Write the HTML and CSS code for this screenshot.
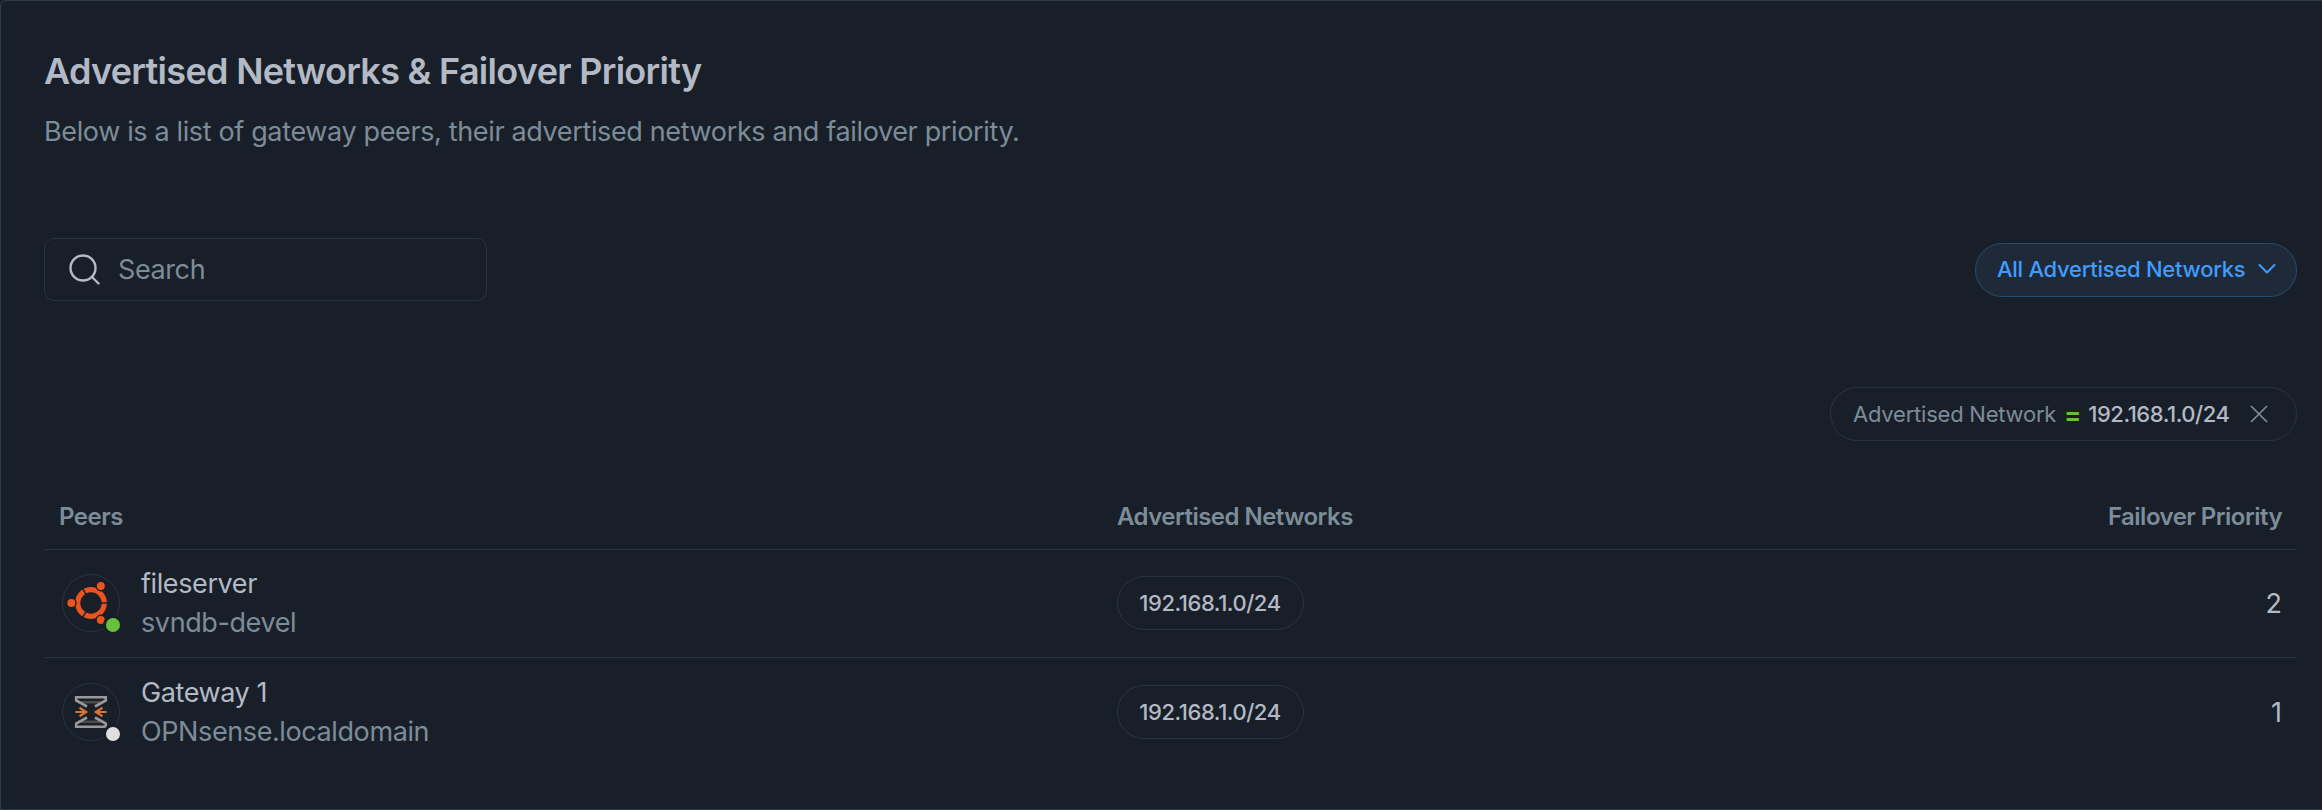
FILE: index.html
```
<!DOCTYPE html>
<html lang="en">

<head>
    <meta charset="UTF-8">
    <meta name="viewport" content="width=device-width, initial-scale=1.0">
    <link rel="stylesheet" href="styles.css">

    <title>Advertised Networks</title>
</head>

<body>

    <div class="card">
        <h1 class="heading">Advertised Networks &amp; Failover Priority</h1>
        <p class="description">Below is a list of gateway peers, their advertised networks and failover priority.</p>

        <div class="toolbar">
            <div class="search-box">
                <svg class="search-icon" viewBox="0 0 32 32">
                    <circle cx="14" cy="14" r="12.5" />
                    <path d="M23 23L29.5 29.5" />
                </svg>
                <input class="search-input" type="text" placeholder="Search">
            </div>
            <button type="button" class="filter-button">
                <span>All Advertised Networks</span>
                <svg class="chevron" viewBox="0 0 18 12">
                    <path d="M1.5 2L9 9.5L16.5 2" />
                </svg>
            </button>
        </div>

        <div class="active-filters">
            <div class="filter-chip">
                <span class="filter-name">Advertised Network</span>
                <span class="filter-equal">=</span>
                <span class="filter-value">192.168.1.0/24</span>
                <svg class="close-icon" viewBox="0 0 18 18">
                    <path d="M1 1L17 17M17 1L1 17" />
                </svg>
            </div>
        </div>

        <table class="peer-table">
            <thead>
                <tr>
                    <th class="col-peer">Peers</th>
                    <th class="col-network">Advertised Networks</th>
                    <th class="col-priority">Failover Priority</th>
                </tr>
            </thead>
            <tbody>
                <tr>
                    <td>
                        <div class="peer">
                            <div class="avatar">
                                <!-- ubuntu -->
                                <svg class="os-icon" viewBox="1 1 56 56">
                                    <circle class="ubuntu-ring" cx="29" cy="29" r="13.3" />
                                    <path class="ubuntu-gap" d="M37 29H47M25 22.1L20 13.4M25 35.9L20 44.6" />
                                    <g class="ubuntu-head">
                                        <circle cx="9.4" cy="29" r="4.7" />
                                        <circle cx="38.8" cy="12" r="4.7" />
                                        <circle cx="38.8" cy="46" r="4.7" />
                                    </g>
                                </svg>
                                <span class="status online"></span>
                            </div>
                            <div class="peer-text">
                                <div class="peer-name">fileserver</div>
                                <div class="peer-host">svndb-devel</div>
                            </div>
                        </div>
                    </td>
                    <td><span class="tag">192.168.1.0/24</span></td>
                    <td class="priority">2</td>
                </tr>
                <tr>
                    <td>
                        <div class="peer">
                            <div class="avatar">
                                <!-- opnsense -->
                                <svg class="os-icon" viewBox="1 1 56 56">
                                    <path class="opn-bar" d="M19 19.2H39M19 38.8H39" />
                                    <path class="opn-frame" d="M25 23.5L14.2 17.5V14.2H43.8V17.5L33 23.5M25 34.5L14.2 40.5V43.8H43.8V40.5L33 34.5" />
                                    <path class="opn-arrow" d="M13.3 29H24M17.5 24.8L24.2 29L17.5 33.2M44.7 29H34M40.5 24.8L33.8 29L40.5 33.2" />
                                </svg>
                                <span class="status offline"></span>
                            </div>
                            <div class="peer-text">
                                <div class="peer-name">Gateway 1</div>
                                <div class="peer-host">OPNsense.localdomain</div>
                            </div>
                        </div>
                    </td>
                    <td><span class="tag">192.168.1.0/24</span></td>
                    <td class="priority">1</td>
                </tr>
            </tbody>
        </table>
    </div>

</body>

</html>
```
FILE: styles.css
```
* {
    box-sizing: border-box;
}

body {
    margin: 0;
    background-color: #191f28;
    font-family: Inter, sans-serif;
    color: #b3bac5;
}

.card {
    height: 810px;
    padding: 47px 25px 0 43px;
    border: 1px solid #2d3a4a;
    border-right: none;
    border-top-left-radius: 6px;
}

.heading {
    margin: 0;
    font-size: 36px;
    font-weight: 600;
    line-height: 46px;
    letter-spacing: -0.7px;
}

.description {
    margin: 18px 0 0;
    font-size: 27px;
    line-height: 40px;
    letter-spacing: -0.36px;
    color: #7d8c99;
}

.toolbar {
    display: flex;
    justify-content: space-between;
    align-items: center;
    margin-top: 86px;
}

.search-box {
    display: flex;
    align-items: center;
    width: 443px;
    height: 63px;
    padding: 0 24px;
    border: 1px solid #2b333f;
    border-radius: 10px;
}

.search-icon {
    width: 32px;
    height: 32px;
    fill: none;
    stroke: #b3bac5;
    stroke-width: 2.4;
    stroke-linecap: round;
}

.search-input {
    flex: 1;
    min-width: 0;
    margin-left: 17px;
    padding: 0;
    border: none;
    outline: none;
    background: none;
    font: 27px Inter, sans-serif;
    letter-spacing: -0.4px;
    color: #b3bac5;
}

.search-input::placeholder {
    color: #7d8c99;
}

.filter-button {
    display: flex;
    justify-content: space-between;
    align-items: center;
    width: 322px;
    height: 54px;
    padding: 0 20px 1px 21px;
    border: 1px solid #264a73;
    border-radius: 27px;
    background-color: #1e2a38;
    font: 500 22px Inter, sans-serif;
    letter-spacing: -0.27px;
    white-space: nowrap;
    color: #409cff;
}

.chevron {
    width: 18px;
    height: 12px;
    fill: none;
    stroke: #409cff;
    stroke-width: 2;
    stroke-linecap: round;
    stroke-linejoin: round;
}

.active-filters {
    display: flex;
    justify-content: flex-end;
    margin-top: 86px;
}

.filter-chip {
    display: flex;
    align-items: center;
    width: 467px;
    height: 54px;
    padding: 0 28px 0 22px;
    border: 1px solid #2b333f;
    border-radius: 27px;
    font-size: 22px;
    white-space: nowrap;
}

.filter-name {
    letter-spacing: -0.22px;
    color: #7d8c99;
}

.filter-equal {
    margin: 2px 7px 0 8px;
    font-size: 25px;
    font-weight: 700;
    color: #67c23a;
}

.filter-value {
    font-weight: 500;
    letter-spacing: -0.45px;
}

.close-icon {
    width: 18px;
    height: 18px;
    margin-left: auto;
    fill: none;
    stroke: #7d8c99;
    stroke-width: 1.7;
}

.peer-table {
    width: 100%;
    margin-top: 42px;
    border-collapse: separate;
    border-spacing: 0;
    table-layout: fixed;
}

th {
    height: 67px;
    padding: 0 15px;
    border-bottom: 1px solid #2b333f;
    text-align: left;
    font-size: 24px;
    font-weight: 600;
    letter-spacing: -0.52px;
    color: #7d8c99;
}

td {
    height: 108px;
    padding: 0 15px 1px;
    border-bottom: 1px solid #2b333f;
}

tbody tr:last-child td {
    padding-bottom: 0;
    border-bottom: none;
}

.col-peer {
    width: 1058px;
}

.col-priority,
.priority {
    text-align: right;
}

.priority {
    font-size: 27px;
}

.peer {
    display: flex;
    align-items: center;
    padding-left: 3px;
}

.avatar {
    position: relative;
    width: 58px;
    height: 58px;
    border: 1px solid #2b333f;
    border-radius: 50%;
}

.os-icon {
    display: block;
    width: 56px;
    height: 56px;
    fill: none;
}

.ubuntu-ring {
    stroke: #e95420;
    stroke-width: 5.2;
}

.ubuntu-gap {
    stroke: #191f28;
    stroke-width: 1.4;
}

.ubuntu-head {
    fill: #e95420;
    stroke: #191f28;
    stroke-width: 1.4;
}

.opn-frame {
    stroke: #999;
    stroke-width: 2.6;
}

.opn-bar {
    stroke: #4a4a4a;
    stroke-width: 2.6;
}

.opn-arrow {
    stroke: #d9722c;
    stroke-width: 2.2;
}

/* dot over the avatar corner */
.status {
    position: absolute;
    right: -4px;
    bottom: -4px;
    width: 20px;
    height: 20px;
    border: 3px solid #191f28;
    border-radius: 50%;
}

.online {
    background-color: #67c23a;
}

.offline {
    background-color: #dfdfdf;
}

.peer-text {
    margin-left: 21px;
    font-size: 27px;
    line-height: 39px;
    letter-spacing: -0.4px;
}

.peer-host {
    color: #7d8c99;
}

.tag {
    display: inline-flex;
    justify-content: center;
    align-items: center;
    width: 187px;
    height: 54px;
    padding: 0 1px 1px 0;
    border: 1px solid #2b333f;
    border-radius: 27px;
    font-size: 22px;
    font-weight: 500;
    letter-spacing: -0.45px;
    vertical-align: middle;
}
```
